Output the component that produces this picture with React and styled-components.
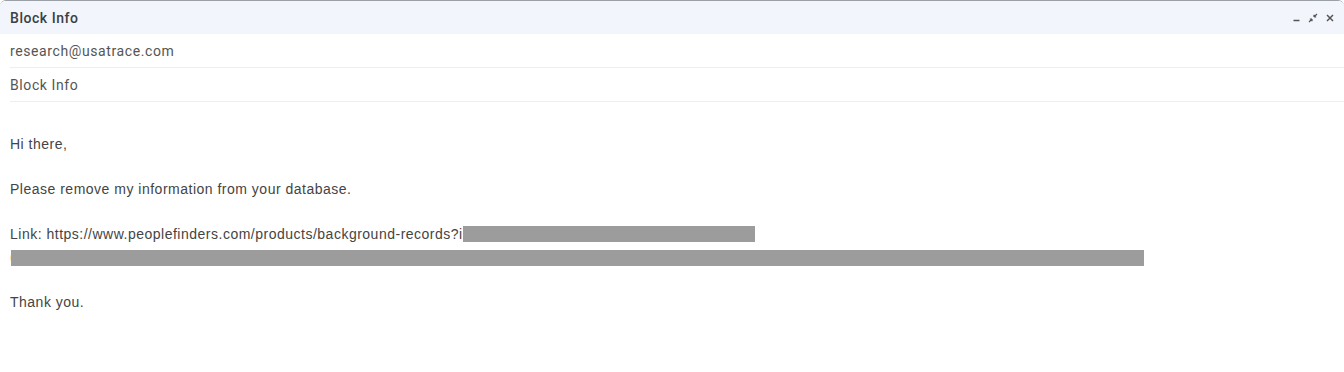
import React from 'react'
import styled, { createGlobalStyle } from 'styled-components'

const Global = createGlobalStyle`
  html, body { margin: 0; padding: 0; background: #fff; }
  body { font-family: Roboto, "Liberation Sans", Arial, sans-serif; }
`

const Window = styled.div`
  width: 1344px;
  height: 372px;
  background: #fff;
  border-top: 1px solid #9aa0a6;
  border-radius: 6px 6px 0 0;
  box-sizing: border-box;
  overflow: hidden;
`

const TitleBar = styled.div`
  display: flex;
  align-items: center;
  justify-content: space-between;
  height: 33px;
  padding: 0 9px 0 10px;
  background: #f2f6fc;
`

const Title = styled.span`
  font-size: 14px;
  font-weight: 500;
  letter-spacing: 0.55px;
  color: #3c4043;
`

const Controls = styled.div`
  display: flex;
  align-items: center;
  gap: 7px;
  padding-top: 1px;
`

const Field = styled.div`
  margin-left: 10px;
  height: 33px;
  display: flex;
  align-items: center;
  font-size: 14px;
  letter-spacing: 0.6px;
  color: #555;
  border-bottom: 1px solid #eceff1;
`

const Body = styled.div`
  padding: 31px 10px 0;
  font-family: "Liberation Sans", Arial, sans-serif;
  font-size: 14px;
  letter-spacing: 0.5px;
  line-height: 22.5px;
  color: #444;
`

const Para = styled.p`
  margin: 0 0 22.5px;
`

const Redact = styled.span`
  display: inline-block;
  vertical-align: ${p => p.$shift || '-3px'};
  width: ${p => p.$w}px;
  height: 16px;
  margin-left: ${p => p.$ml || 0}px;
  background: #9c9c9c;
`

function Icons() {
  return (
    <Controls>
      <svg width="9" height="10" viewBox="0 0 9 10">
        <path d="M1.5 7.5h6" stroke="#555" strokeWidth="1.6" />
      </svg>
      <svg width="10" height="10" viewBox="0 0 10 10">
        <path d="M9 1L6 4M6 4V1.8M6 4H8.2" stroke="#555" strokeWidth="1.2" fill="none" />
        <path d="M1 9L4 6M4 6V8.2M4 6H1.8" stroke="#555" strokeWidth="1.2" fill="none" />
      </svg>
      <svg width="10" height="10" viewBox="0 0 10 10">
        <path d="M2 2l6 6M8 2l-6 6" stroke="#555" strokeWidth="1.5" />
      </svg>
    </Controls>
  )
}

export default function App() {
  return (
    <>
      <Global />
      <Window>
        <TitleBar>
          <Title>Block Info</Title>
          <Icons />
        </TitleBar>
        <Field>research@usatrace.com</Field>
        <Field>Block Info</Field>
        <Body>
          <Para>Hi there,</Para>
          <Para>Please remove my information from your database.</Para>
          <Para>
            Link: https://www.peoplefinders.com/products/background-records?i<Redact $w={292} />
            <br />
            (<Redact $w={1133} $shift="-4.5px" $ml={-4} />
          </Para>
          <Para>Thank you.</Para>
        </Body>
      </Window>
    </>
  )
}
